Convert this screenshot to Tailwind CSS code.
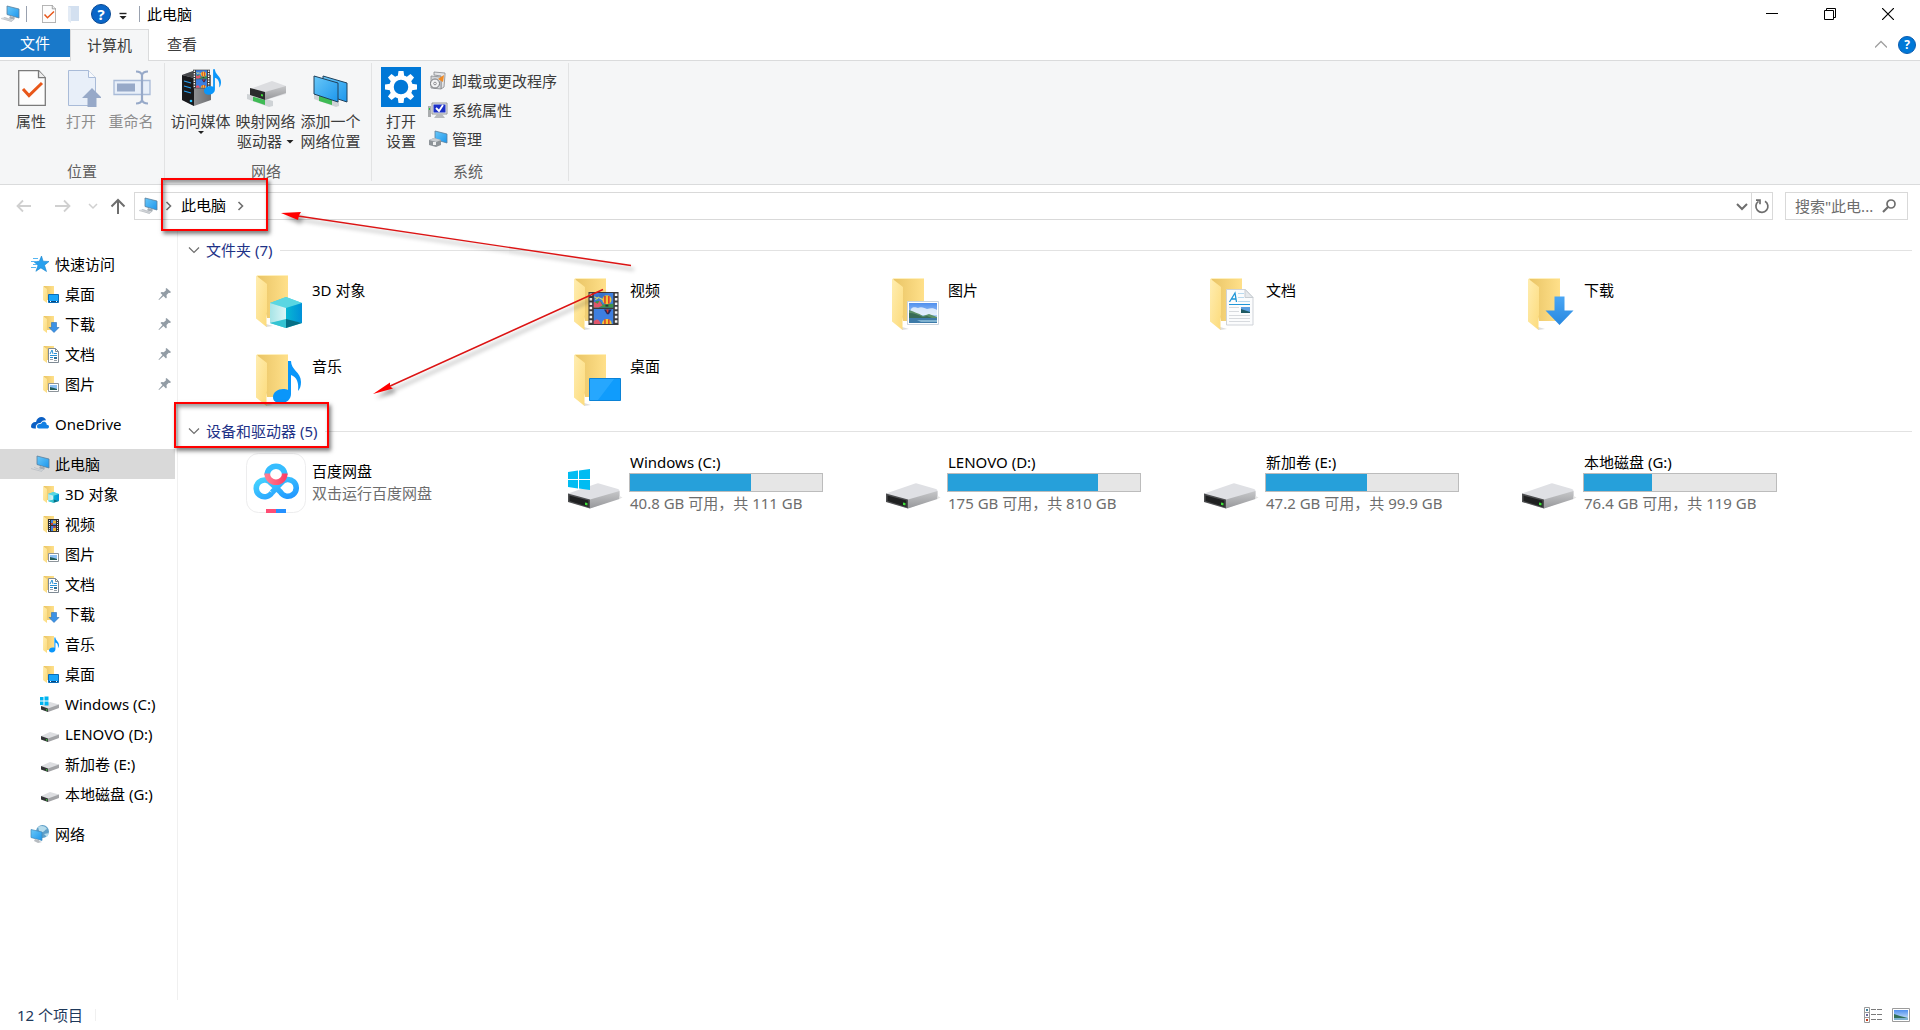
<!DOCTYPE html>
<html lang="zh-CN">
<head>
    <meta charset="UTF-8">
    <meta name="viewport" content="width=device-width, initial-scale=1.0">
    <title>此电脑</title>
    <script src="https://cdn.jsdelivr.net/npm/@tailwindcss/browser@4"></script>
</head>
<body class="relative flex min-h-screen flex-col bg-white font-['Noto_Sans','Noto_Sans_CJK_SC',sans-serif] text-[15px] leading-5 text-black">

    <!-- Icon sprite -->
    <svg class="absolute h-0 w-0" aria-hidden="true">
        <defs>
            <linearGradient id="gBack" x1="0" y1="0" x2="1" y2="0"><stop offset="0" stop-color="#e9c465"/><stop offset="1" stop-color="#ffe08a"/></linearGradient>
            <linearGradient id="gFlap" x1="0" y1="0" x2="1" y2="1"><stop offset="0" stop-color="#ffedb0"/><stop offset="1" stop-color="#fcdb7c"/></linearGradient>
            <linearGradient id="gScreen" x1="0" y1="0" x2="1" y2="1"><stop offset="0" stop-color="#6ac8f8"/><stop offset="1" stop-color="#1c96ec"/></linearGradient>
            <linearGradient id="gSide" x1="0" y1="0" x2="0" y2="1"><stop offset="0" stop-color="#c6c7c9"/><stop offset="1" stop-color="#97989b"/></linearGradient>
            <linearGradient id="gSky" x1="0" y1="0" x2="0" y2="1"><stop offset="0" stop-color="#4f8fee"/><stop offset="1" stop-color="#d9ecfb"/></linearGradient>
            <linearGradient id="gCubeL" x1="0" y1="0" x2="1" y2="0"><stop offset="0" stop-color="#a7e4e6"/><stop offset="1" stop-color="#dcf6f7"/></linearGradient>
            <linearGradient id="gCubeR" x1="0" y1="0" x2="1" y2="0"><stop offset="0" stop-color="#08b7d3"/><stop offset="1" stop-color="#0090d8"/></linearGradient>
            <linearGradient id="gArrow" x1="0" y1="0" x2="0" y2="1"><stop offset="0" stop-color="#4aa6f4"/><stop offset="1" stop-color="#2888e0"/></linearGradient>
            <linearGradient id="gPanL" x1="0" y1="0" x2="1" y2="1"><stop offset="0" stop-color="#45d4ff"/><stop offset="1" stop-color="#2196ff"/></linearGradient>
            <linearGradient id="gPanR" x1="0" y1="0" x2="1" y2="0"><stop offset="0" stop-color="#ff7a90"/><stop offset="1" stop-color="#ff4268"/></linearGradient>
            <linearGradient id="gTower" x1="0" y1="0" x2="1" y2="0"><stop offset="0" stop-color="#a8a9ab"/><stop offset="1" stop-color="#6e6f72"/></linearGradient>
        </defs>

        <!-- 64px folder -->
        <symbol id="folder" viewBox="0 0 64 64">
            <path d="M24 57l7 2-7 1z" fill="#ddd"/>
            <path d="M15 8h31v43H25z" fill="url(#gBack)"/>
            <path d="M14 8.500L25 17v28l-.5 1.500V60L14 51.500z" fill="url(#gFlap)"/>
            <path d="M15 8.500h31" stroke="#fff0bd"/>
        </symbol>
        <!-- hot-air balloon film strip -->
        <symbol id="film" viewBox="0 0 31 34">
            <path d="M0 0h31v34H0z" fill="#3b3b3d"/>
            <path d="M5.500 1h20v15h-20zM5.500 17.500h20V33h-20z" fill="#3d7fe0"/>
            <path d="M5.500 12c3-5 8-3 9 1l11-1v4h-20z" fill="#3e9448"/>
            <path d="M5.500 10l4 2 2-3 3 5-4 2h-5z" fill="#e0566b"/>
            <path d="M6 5l4 2M7 8l4-3M11 6l4 2" stroke="#dfe77c" stroke-width="1.200"/>
            <circle cx="19" cy="8" r="4.700" fill="#f4c534"/>
            <path d="M17 4v8M21 4v8" stroke="#d8372c" stroke-width="1.600"/><path d="M17.500 13h3v2h-3z" fill="#333"/>
            <path d="M16 18h8l-3 5h-2z" fill="#2b2757"/><path d="M18 18h3l-1 4z" fill="#d8372c"/>
            <path d="M14 33c0-7 10-7 10 0z" fill="#f4c534"/><path d="M17 28v5M21 28v5" stroke="#d8372c" stroke-width="1.500"/>
            <path d="M5.500 30c3-3 6-2 7 3h-7z" fill="#e0566b"/>
            <path d="M2.500 1.500v32M28.500 1.500v32" stroke="#f5f5f5" stroke-width="2.600" stroke-dasharray="2.600 2"/>
        </symbol>
        <symbol id="photo" viewBox="0 0 32 24">
            <path d="M.5.500h31v23H.5z" fill="#fff" stroke="#c9d3de"/>
            <path d="M2 2h28v20H2z" fill="url(#gSky)"/>
            <path d="M4 8c3-3 5-1 7-1 3-2 7 0 9 1 4-1 7-1 10 1v5H2z" fill="#f2f8fd" opacity=".8"/>
            <path d="M2 9c5 2 9 3 14 6l6-2 8 3v1H2z" fill="#5c9068"/>
            <path d="M2 12c5 0 9 2 14 4l4-1 5 2H2z" fill="#386b57"/>
            <path d="M2 17h28v5H2z" fill="#3d7aa8"/><path d="M10 19h20v2H14z" fill="#7fb2d0"/>
        </symbol>
        <symbol id="note" viewBox="0 0 28 42">
            <path d="M15 0h3c0 9 10 11 10 21 0 4-1 7-3 9 1-8-1-14-7-16v19c0 5-4 9-10 9-5 0-8-2-8-6 0-5 5-8 10-8 2 0 4 0 5 1z" fill="#0a96fa"/>
        </symbol>
        <symbol id="cube" viewBox="0 0 32 32">
            <path d="M16 0l16 6v20l-16 5L0 26V6z" fill="#3fd0e0"/>
            <path d="M16 0l16 6-16 5L0 6z" fill="#5ad6e2"/>
            <path d="M0 6l16 5v12L0 26z" fill="url(#gCubeL)"/>
            <path d="M32 6l-16 5v12l16 3z" fill="url(#gCubeR)"/>
            <path d="M16 22l16 4-16 5z" fill="#056f86"/><path d="M0 26l16-4v9z" fill="#35c3d2"/>
        </symbol>

        <symbol id="tile-3d" viewBox="0 0 64 64"><use href="#folder" y="-3" width="64" height="64"/><use href="#cube" x="28" y="27" width="32" height="32"/></symbol>
        <symbol id="tile-video" viewBox="0 0 64 64"><use href="#folder" width="64" height="64"/><use href="#film" x="28" y="22" width="31" height="33"/></symbol>
        <symbol id="tile-picture" viewBox="0 0 64 64"><use href="#folder" width="64" height="64"/><use href="#photo" x="29" y="31" width="32" height="24"/></symbol>
        <symbol id="tile-document" viewBox="0 0 64 64">
            <use href="#folder" width="64" height="64"/>
            <path d="M30.500 19.500h19l7.500 8V55H30.500z" fill="#fbfcfd" stroke="#cfd3d8"/>
            <path d="M49 19.500v8h8z" fill="#e6e9ec" stroke="#c8cdd2"/>
            <path d="M33.500 32l5.500-9 1.500 9M35.500 29h4.500" fill="none" stroke="#1e96d8" stroke-width="1.300"/>
            <path d="M42 23.500h6M42 27.500h6M42 31.500h12" stroke="#b9d9ee"/>
            <path d="M33 34.500h21" stroke="#1e96d8"/>
            <path d="M33 37.500h10M33 41.500h10M33 45.500h21M33 48.500h21M33 51.500h21" stroke="#d7dade"/>
            <path d="M45 37h9v6h-9z" fill="#5b9fe0"/><path d="M45 39l9 3v1h-9z" fill="#1e5a63"/>
        </symbol>
        <symbol id="tile-download" viewBox="0 0 64 64"><use href="#folder" width="64" height="64"/><path d="M40.500 26.500h10v14h9L45.500 55l-14-14.500h9z" fill="url(#gArrow)"/></symbol>
        <symbol id="tile-music" viewBox="0 0 64 64"><use href="#folder" width="64" height="64"/><use href="#note" x="31" y="15" width="28" height="42"/></symbol>
        <symbol id="tile-desktop" viewBox="0 0 64 64"><use href="#folder" width="64" height="64"/><path d="M29.500 32.500h31v22h-31z" fill="#109cfc" stroke="#0b82d6"/><path d="M30 33h24L38 54h-8z" fill="#31acff" opacity=".7"/></symbol>
        <symbol id="drive" viewBox="0 0 64 64">
            <path d="M8 42.500L37 32.500q1-.4 2 0L58 38q1.500.5 1.500 2v7L30 57.500 8 50.500z" fill="#dfe0e4"/>
            <path d="M30 48.500L59.500 40v8L30 57.500z" fill="url(#gSide)"/>
            <path d="M8 42.500l22 6v9L8 51z" fill="#4e4f51"/><path d="M9.500 44.500l19 5v6.500L9.500 50z" fill="#1f2021"/>
            <path d="M25 51.500l2.500.6v2.500L25 54z" fill="#3fe03a"/>
            <path d="M59.500 45l3 1.500-3 1.500z" fill="#e4e4e4"/>
        </symbol>
        <symbol id="winlogo" viewBox="0 0 22 21"><path d="M0 3l10-1.500V10H0zM11 1.400L22 0v10H11zM0 11h10v8.500L0 18zM11 11h11v10l-11-1.400z" fill="#00bcf2"/></symbol>
        <symbol id="tile-windrive" viewBox="0 0 64 64"><use href="#drive" width="64" height="64"/><use href="#winlogo" x="8" y="18" width="22" height="21"/></symbol>
        <symbol id="tile-pan" viewBox="0 0 64 64">
            <rect x="4.500" y="2.500" width="59" height="59" rx="12" fill="#fff" stroke="#ededee"/>
            <g fill="none" stroke-width="5.600">
                <path d="M30 41.500a8.400 8.400 0 1 1-.5-9l9 8.500a8.400 8.400 0 1 0 .5-9L30 41.500" stroke="url(#gPanL)"/>
                <path d="M25.200 24a8.800 8.800 0 0 1 17.600 0" stroke="#36bdff"/>
                <path d="M25.200 22.500a8.800 8.800 0 0 0 17.600 0" stroke="url(#gPanR)"/>
            </g>
            <path d="M24 58h10v4H24z" fill="#ff4d74"/><path d="M34 58h10v4H34z" fill="#2591ff"/>
        </symbol>

        <!-- 20px tree icons -->
        <symbol id="s-folder" viewBox="0 0 20 20"><path d="M3.500 2H14v14H7z" fill="url(#gBack)"/><path d="M3 2.300L7 5v14l-4-3z" fill="url(#gFlap)"/></symbol>
        <symbol id="s-desktop" viewBox="0 0 20 20"><use href="#s-folder" width="20" height="20"/><path d="M8.500 10.500h10v8h-10z" fill="#17a4fa" stroke="#0a6cb8"/><path d="M9 17.500h9" stroke="#07467c"/><path d="M10 17.500h1M16 17.500h1" stroke="#fff"/></symbol>
        <symbol id="s-download" viewBox="0 0 20 20"><use href="#s-folder" width="20" height="20"/><path d="M11.500 8.500h5v5H19L14 18.500 9 13.500h2.500z" fill="#3c92e6" stroke="#2a6fb4" stroke-width=".6"/></symbol>
        <symbol id="s-document" viewBox="0 0 20 20"><use href="#s-folder" width="20" height="20"/><path d="M8.500 4.500h7l3 3v11h-10z" fill="#fff" stroke="#7e8a94"/><path d="M15.500 4.500v3h3" fill="none" stroke="#7e8a94"/><path d="M10 10l2-4 1 4M14 9.500h3M10 11.500h7M10 13.500h3" fill="none" stroke="#2a92d6"/><path d="M10 15.500h3M14 16.500h3" stroke="#9aa2a8"/><path d="M14 13h3v2h-3z" fill="#2e6f96"/></symbol>
        <symbol id="s-picture" viewBox="0 0 20 20"><use href="#s-folder" width="20" height="20"/><path d="M8.500 9.500h10v8h-10z" fill="#fff" stroke="#8d949a"/><path d="M10 11h7v5h-7z" fill="#8dc0f4"/><path d="M10 13l4 1 3 1v1h-7z" fill="#245e5a"/></symbol>
        <symbol id="s-video" viewBox="0 0 20 20">
            <use href="#s-folder" width="20" height="20"/>
            <path d="M8 5h11v13H8z" fill="#2f3032"/><path d="M11 6h5v5h-5zM11 12h5v5h-5z" fill="#3d7fe0"/><path d="M13 6.500h3v3h-3zM13 14h3v3h-3z" fill="#f0b932"/><path d="M11 9h2v2h-2zM13.500 12h2v2h-2z" fill="#b8433f"/>
            <path d="M9.500 6v12M17.500 6v12" stroke="#e9e9e9" stroke-dasharray="1 1"/>
        </symbol>
        <symbol id="s-music" viewBox="0 0 20 20"><use href="#s-folder" width="20" height="20"/><use href="#note" x="9" y="3" width="10" height="16"/></symbol>
        <symbol id="s-3d" viewBox="0 0 20 20"><use href="#s-folder" width="20" height="20"/><use href="#cube" x="8" y="8" width="11" height="11"/></symbol>
        <symbol id="s-drive" viewBox="0 0 20 20"><path d="M1 12l9-4 9 2.500v3L8 17.500l-7-2z" fill="#dddee1"/><path d="M8 14.500l11-4v3.500L8 18z" fill="#a2a3a6"/><path d="M1 12l7 2.500V18l-7-2.500z" fill="#333436"/><path d="M6 15.200h1.300v1.300H6z" fill="#3fe03a"/></symbol>
        <symbol id="s-windrive" viewBox="0 0 20 20"><use href="#s-drive" width="20" height="20"/><path d="M0 3h3.500v3.500H0zM4.500 2.500h4v4h-4zM0 7.500h3.500V11H0zM4.500 7.500h4v4h-4z" fill="#00b4f0"/></symbol>
        <symbol id="s-pc" viewBox="0 0 20 20"><path d="M7 2l12 3v9L7 10.500z" fill="url(#gScreen)" stroke="#5a7f9c" stroke-width=".8"/><path d="M10 12l5 1.500-1 2.500-5-1.500z" fill="#a6adb3"/><path d="M1 14l4-1 9 3-3 2z" fill="#d9dcdf"/><path d="M1 14.500l11 3M4 13.500l9 3" stroke="#b4b9be" stroke-width=".7"/></symbol>
        <symbol id="s-star" viewBox="0 0 20 20"><path d="M11.500 2l1.600 5.200 5.900.3-4.500 3.700 2 6.300-5.600-3.600-5 3.400L8 11.500 4 7.700l5.300-.4z" fill="#28a0ee" stroke="#1583cc" stroke-width=".6"/><path d="M3 4.500h5M1 7.500h6M3 10.500h4M1 13.500h5" stroke="#56b5f2" stroke-width="1"/></symbol>
        <symbol id="s-cloud" viewBox="0 0 20 20"><path d="M1 12.500C1 9 4 7.500 6 8c.7-3.500 3-5 5.500-5 2.300 0 4 1.500 4.500 3.500-3 0-4.500 1-5.500 3-3 0-5 2-4.500 5H4c-2 0-3-1-3-2z" fill="#0a5fc4"/><path d="M7 12.500c0-2 2-3 4-2.500.7-2 2.500-3 4-2 1.300.7 1.700 1.700 1.700 2.700C18.300 10.700 19 11.500 19 12.700c0 1.200-.8 1.800-2 1.800H9c-1.300 0-2-.8-2-2z" fill="#1280e4"/><path d="M6.300 13.500c-.5-3 1.700-4.300 4.300-4 .9-2 2.700-3.200 5.400-2.500" fill="none" stroke="#fff" stroke-width=".8"/></symbol>
        <symbol id="s-network" viewBox="0 0 20 20"><circle cx="12.500" cy="7.500" r="6.500" fill="#5f9fc8"/><path d="M8 3c3-2 8-1 9 2-3 1-3 4-6 3s-2-3-3-5zM14 10l5-1-2 4z" fill="#b6dcec"/><path d="M1 5.500l11 2.500v8.500L1 13.500z" fill="url(#gScreen)" stroke="#3f87b8" stroke-width=".7"/><path d="M5 15l4 1v1l3 1-4 1-4-2z" fill="#b7bcc1"/></symbol>
        <symbol id="s-pin" viewBox="0 0 14 14"><path d="M8.500 1L13 5l-1 1-1.200-.3L8.500 8l.3 2.500L8 11.500 5.500 9 1 13l-.5-.5L4.500 8 2.500 6l1-1 2.300.3L8.200 3 7.500 2z" fill="#929ca5"/></symbol>
        <symbol id="check-doc" viewBox="0 0 28 36"><path d="M.7.700h20l6.600 7v27.600H.7z" fill="#fdfdfd" stroke="#7b7b7b" stroke-width="1.300"/><path d="M20.500.700v7h7" fill="#eee" stroke="#7b7b7b" stroke-width="1.300"/><path d="M5 19l6 6.500L24 13" fill="none" stroke="#e8571a" stroke-width="3"/></symbol>
    </svg>

    <!-- Title bar -->
    <header class="flex h-[29px] items-center pb-0.5">
        <svg class="h-5 w-5"><use href="#s-pc"/></svg>
        <span class="ml-1.5 h-4 w-px bg-gray-400"></span>
        <button class="ml-[15px]" aria-label="属性"><svg class="h-[18px] w-[14px]"><use href="#check-doc"/></svg></button>
        <button class="ml-3" aria-label="新建文件夹">
            <svg class="h-[18px] w-3" viewBox="0 0 12 18"><path d="M0 1h11v15H3z" fill="#d3e0f0"/><path d="M0 1l3 2v15l-3-2z" fill="#e3ebf5"/></svg>
        </button>
        <button class="ml-[11px] flex h-5 w-5 items-center justify-center rounded-full border border-[#0b4a94] bg-[#0a66c8] font-bold text-white" aria-label="帮助">?</button>
        <button class="ml-2" aria-label="自定义快速访问工具栏"><svg class="h-5 w-2" viewBox="0 0 8 20"><path d="M.5 9.500h7" stroke="#222" stroke-width="1.400"/><path d="M.5 12h7L4 15.500z" fill="#222"/></svg></button>
        <span class="ml-3 h-4 w-px bg-gray-400"></span>
        <h1 class="ml-[7px] flex-1">此电脑</h1>
        <div class="mr-[3px] flex">
            <button class="flex h-7 w-[58px] items-center justify-center" aria-label="最小化"><svg class="h-3 w-3" viewBox="0 0 12 12"><path d="M0 5.500h12" stroke="#000"/></svg></button>
            <button class="flex h-7 w-[58px] items-center justify-center" aria-label="还原"><svg class="h-3 w-3" viewBox="0 0 12 12"><path d="M.5 2.500h9v9h-9zM2.500 2.500v-2h9v9h-2" fill="none" stroke="#000"/></svg></button>
            <button class="flex h-7 w-[58px] items-center justify-center" aria-label="关闭"><svg class="h-3 w-3" viewBox="0 0 12 12"><path d="M0 0l12 12M12 0L0 12" stroke="#000" stroke-width="1.200"/></svg></button>
        </div>
    </header>

    <!-- Ribbon tabs -->
    <nav class="flex h-8 items-stretch border-b border-[#dadbdc] text-[#3c3c3c]">
        <button class="mb-[3px] w-[70px] bg-[#1979ca] text-white">文件</button>
        <button class="-mb-px w-[79px] border border-b-0 border-[#dadbdc] bg-[#f5f6f7] pb-0.5">计算机</button>
        <button class="w-[66px] pb-0.5">查看</button>
        <div class="ml-auto flex items-center gap-[11px] pr-1">
            <button aria-label="最小化功能区"><svg class="h-3 w-3" viewBox="0 0 12 12"><path d="M0 8.500l6-6 6 6" fill="none" stroke="#a0a0a0" stroke-width="1.300"/></svg></button>
            <button class="flex h-[18px] w-[18px] items-center justify-center rounded-full border border-[#0b5cb0] bg-[#0078d7] text-xs font-bold text-white" aria-label="帮助">?</button>
        </div>
    </nav>

    <!-- Ribbon -->
    <section class="flex h-[124px] border-b border-[#dadbdc] bg-[#f5f6f7] pt-0.5 pb-[3px] text-[#3c3c3c]">
        <div class="flex w-[165px] flex-col border-r border-[#e2e3e4]">
            <div class="flex flex-1 items-start pt-1 pl-1.5">
                <button class="flex w-[50px] flex-col items-center gap-1">
                    <svg class="h-10 w-10" viewBox="0 0 40 40"><use href="#check-doc" x="7" y="3" width="28" height="36"/></svg>
                    <span>属性</span>
                </button>
                <button class="flex w-[50px] flex-col items-center gap-1 text-[#8d8d8d]">
                    <svg class="h-10 w-10" viewBox="0 0 40 40"><path d="M7.500 3.500h20l7 7v28h-27z" fill="#e8eff9" stroke="#a9bbd8"/><path d="M27.500 3.500v7h7" fill="#f7f9fc" stroke="#a9bbd8"/><path d="M31 21l10 10h-5.500v9.500h-9V31H21z" fill="#97a9c8"/></svg>
                    <span>打开</span>
                </button>
                <button class="flex w-[50px] flex-col items-center gap-1 text-[#8d8d8d]">
                    <svg class="h-10 w-10" viewBox="0 0 40 40"><path d="M3 13.500h36v14H3z" fill="#e8eff9" stroke="#a9bbd8" stroke-width="1.300"/><path d="M6 16.500h18v8H6z" fill="#97a9c8"/><path d="M31 7v27M25 4.500q5 0 6 3.500 1-3.500 6-3.500M25 36.500q5 0 6-3.500 1 3.500 6 3.500" fill="none" stroke="#97a9c8" stroke-width="2.200"/></svg>
                    <span class="whitespace-nowrap">重命名</span>
                </button>
            </div>
            <p class="text-center text-[#5f5f5f]">位置</p>
        </div>
        <div class="flex w-[207px] flex-col border-r border-[#e2e3e4]">
            <div class="flex flex-1 items-start pt-1 pl-[3px]">
                <button class="flex w-[65px] flex-col items-center gap-1">
                    <svg class="h-10 w-10" viewBox="0 0 40 40">
                        <path d="M1 8l12-4 17 4v25l-17 6L1 33z" fill="url(#gTower)"/>
                        <path d="M1 8l12 3v28L1 33z" fill="#18191c"/><path d="M1 8l11-4 8 2-7 5z" fill="#47494d"/>
                        <path d="M3 14l7 2M3 19l7 2M3 24l7 2" stroke="#2aa0f0" stroke-width="1.300"/><circle cx="10" cy="34" r="1.300" fill="#29c4ff"/>
                        <use href="#film" x="12" y="2" width="17" height="20"/>
                        <use href="#note" x="23" y="2" width="17" height="26"/>
                    </svg>
                    <span class="whitespace-nowrap">访问媒体</span>
                    <svg class="-mt-1 h-1 w-2" viewBox="0 0 8 4"><path d="M1 0h6L4 3z" fill="#222"/></svg>
                </button>
                <button class="flex w-[65px] flex-col items-center gap-1">
                    <svg class="h-10 w-10" viewBox="0 0 40 40">
                        <path d="M1 27l6 1 20 6v5l-4 1-14-5-8-3z" fill="#cfd3d6"/><path d="M7 28l12 4v6L7 34z" fill="#3fbb55"/>
                        <path d="M4 22l22-8 14 5v8L19 33 4 29z" fill="#dcdde0"/><path d="M19 25l21-6v7l-21 7z" fill="url(#gSide)"/><path d="M4 21l15 4v8L4 28z" fill="#2b2c2d"/><path d="M15 27l2 .5v2l-2-.5z" fill="#3fe03a"/>
                    </svg>
                    <span class="whitespace-nowrap">映射网络<br>驱动器<svg class="mb-0.5 ml-1 inline h-1 w-2" viewBox="0 0 8 4"><path d="M.5 0h7L4 3.500z" fill="#222"/></svg></span>
                </button>
                <button class="flex w-[65px] flex-col items-center gap-1">
                    <svg class="h-10 w-10" viewBox="0 0 40 40">
                        <path d="M3 27l5 1 20 6v5l-3 1-14-5-8-3z" fill="#cfd3d6"/><path d="M8 28l13 4v6L8 34z" fill="#3fbb55"/>
                        <path d="M12 9l24 7v19l-24-8z" fill="url(#gScreen)" stroke="#20405a"/><path d="M3 9l24 7v19L3 27z" fill="url(#gScreen)" stroke="#20405a"/>
                    </svg>
                    <span class="whitespace-nowrap">添加一个<br>网络位置</span>
                </button>
            </div>
            <p class="pr-1 text-center text-[#5f5f5f]">网络</p>
        </div>
        <div class="flex w-[197px] flex-col border-r border-[#e2e3e4]">
            <div class="flex flex-1 items-start pt-1 pl-1">
                <button class="flex w-[50px] flex-col items-center gap-1">
                    <svg class="h-10 w-10" viewBox="0 0 40 40">
                        <path d="M0 0h40v40H0z" fill="#0078d7"/>
                        <g fill="#fff"><path id="tooth" d="M17.500 4h5l1 7h-7z"/><use href="#tooth" transform="rotate(45 20 20)"/><use href="#tooth" transform="rotate(90 20 20)"/><use href="#tooth" transform="rotate(135 20 20)"/><use href="#tooth" transform="rotate(180 20 20)"/><use href="#tooth" transform="rotate(225 20 20)"/><use href="#tooth" transform="rotate(270 20 20)"/><use href="#tooth" transform="rotate(315 20 20)"/></g>
                        <circle cx="20" cy="20" r="9.500" fill="none" stroke="#fff" stroke-width="4.500"/>
                    </svg>
                    <span>打开<br>设置</span>
                </button>
                <div class="flex flex-col gap-[9px] pt-1 pl-0.5">
                    <button class="flex items-center gap-1">
                        <svg class="h-5 w-5" viewBox="0 0 20 20"><path d="M6 1l11 1v2l-1 12-3 2V5L6 4z" fill="#e4e5e7" stroke="#85888c" stroke-width=".8"/><path d="M3 5l10 1v12l-10-1z" fill="#d3d5d8" stroke="#85888c" stroke-width=".8"/><path d="M10 8l6-4-1 7z" fill="#f08a24"/><circle cx="7" cy="12.500" r="4.500" fill="#f1f2f3" stroke="#77797c" stroke-width="1"/><circle cx="7" cy="12.500" r="1.300" fill="#fff" stroke="#77797c" stroke-width=".8"/></svg>
                        卸载或更改程序
                    </button>
                    <button class="flex items-center gap-1">
                        <svg class="h-5 w-5" viewBox="0 0 20 20"><path d="M0 6h3v11H0z" fill="#a9acae"/><path d="M1 8h1v2H1z" fill="#2fc43a"/><path d="M4 3h15v11H4z" fill="#e6e7e9" stroke="#96999c"/><path d="M5.500 4.500h12v8h-12z" fill="#1c30c8"/><path d="M8 8l3 3 4-6" fill="none" stroke="#fff" stroke-width="1.800"/><path d="M9 14h5l3 4H6z" fill="#b7babd"/></svg>
                        系统属性
                    </button>
                    <button class="flex items-center gap-1">
                        <svg class="h-5 w-5" viewBox="0 0 20 20"><path d="M7 2l12 3v9L7 10.500z" fill="url(#gScreen)" stroke="#5a7f9c" stroke-width=".8"/><path d="M1 11l5-2 7 2v5l-5 2-7-2z" fill="#8e9499"/><path d="M1 11l5-2 7 2-5 2z" fill="#c8ccd0"/><path d="M5 13h3v3H5z" fill="#f0f1f2"/></svg>
                        管理
                    </button>
                </div>
            </div>
            <p class="pr-1 text-center text-[#5f5f5f]">系统</p>
        </div>
    </section>

    <!-- Navigation and address bar -->
    <div class="flex h-11 items-start pt-[7px] pr-3">
        <div class="flex h-7 w-[134px] items-center pl-4">
            <button aria-label="后退"><svg class="h-4 w-4" viewBox="0 0 16 16"><path d="M15 8H1.500M7 2.500L1.500 8 7 13.500" fill="none" stroke="#d0d0d0" stroke-width="1.800"/></svg></button>
            <button class="ml-[23px]" aria-label="前进"><svg class="h-4 w-4" viewBox="0 0 16 16"><path d="M0 8h14M9 2.500L14.500 8 9 13.500" fill="none" stroke="#d0d0d0" stroke-width="1.800"/></svg></button>
            <button class="ml-[17px]" aria-label="最近浏览的位置"><svg class="h-4 w-2.5" viewBox="0 0 10 16"><path d="M1 6l4 4 4-4" fill="none" stroke="#d0d0d0" stroke-width="1.500"/></svg></button>
            <button class="ml-3" aria-label="上移"><svg class="h-4 w-4" viewBox="0 0 16 16"><path d="M8 16V2M1.500 8.500L8 2l6.500 6.500" fill="none" stroke="#6e6e6e" stroke-width="2"/></svg></button>
        </div>
        <div class="flex h-7 flex-1 items-center border border-[#d9d9d9] pl-[3px]">
            <svg class="h-5 w-5"><use href="#s-pc"/></svg>
            <svg class="ml-[7px] h-3 w-2" viewBox="0 0 8 12"><path d="M1.500 2l4 4-4 4" fill="none" stroke="#6e6e6e" stroke-width="1.600"/></svg>
            <button class="ml-2 pb-0.5">此电脑</button>
            <svg class="ml-[11px] h-3 w-2" viewBox="0 0 8 12"><path d="M1.500 2l4 4-4 4" fill="none" stroke="#6e6e6e" stroke-width="1.600"/></svg>
            <button class="mr-[3px] ml-auto" aria-label="以前的位置"><svg class="h-3 w-3" viewBox="0 0 12 12"><path d="M1 4l5 5 5-5" fill="none" stroke="#6e6e6e" stroke-width="2"/></svg></button>
            <button class="flex h-full w-[21px] items-center justify-center border-l border-[#d9d9d9]" aria-label="刷新">
                <svg class="h-4 w-4" viewBox="0 0 16 16"><path d="M11 3.200a6 6 0 1 1-6.500.2M2 2.200h4v4" fill="none" stroke="#6e6e6e" stroke-width="1.700"/></svg>
            </button>
        </div>
        <div class="ml-3 flex h-7 w-[123px] items-center border border-[#d9d9d9] pl-[9px]">
            <input id="search" type="text" aria-label="搜索此电脑" placeholder="搜索&quot;此电..." class="w-20 outline-none placeholder:text-[#6d6d6d]">
            <button class="ml-[7px]" aria-label="搜索"><svg class="h-[14px] w-[14px]" viewBox="0 0 14 14"><circle cx="9" cy="5" r="4" fill="none" stroke="#6e6e6e" stroke-width="1.700"/><path d="M6 8L1 13" stroke="#6e6e6e" stroke-width="2.200"/></svg></button>
        </div>
    </div>

    <div class="flex flex-1">
        <!-- Navigation tree -->
        <aside class="w-[178px] shrink-0 border-r border-[#f0f0f0] pt-5 *:mb-2.5">
            <div>
                <a href="#" class="flex h-[30px] items-center gap-[5px] pl-[30px]"><svg class="h-5 w-5"><use href="#s-star"/></svg>快速访问</a>
                <a href="#" class="flex h-[30px] items-center gap-[5px] pr-[5px] pl-10"><svg class="h-5 w-5"><use href="#s-desktop"/></svg>桌面<svg class="ml-auto h-[14px] w-[14px]"><use href="#s-pin"/></svg></a>
                <a href="#" class="flex h-[30px] items-center gap-[5px] pr-[5px] pl-10"><svg class="h-5 w-5"><use href="#s-download"/></svg>下载<svg class="ml-auto h-[14px] w-[14px]"><use href="#s-pin"/></svg></a>
                <a href="#" class="flex h-[30px] items-center gap-[5px] pr-[5px] pl-10"><svg class="h-5 w-5"><use href="#s-document"/></svg>文档<svg class="ml-auto h-[14px] w-[14px]"><use href="#s-pin"/></svg></a>
                <a href="#" class="flex h-[30px] items-center gap-[5px] pr-[5px] pl-10"><svg class="h-5 w-5"><use href="#s-picture"/></svg>图片<svg class="ml-auto h-[14px] w-[14px]"><use href="#s-pin"/></svg></a>
            </div>
            <a href="#" class="flex h-[30px] items-center gap-[5px] pl-[30px]"><svg class="h-5 w-5"><use href="#s-cloud"/></svg>OneDrive</a>
            <div>
                <a href="#" class="mr-0.5 flex h-[30px] items-center gap-[5px] bg-[#d9d9d9] pl-[30px]"><svg class="h-5 w-5"><use href="#s-pc"/></svg>此电脑</a>
                <a href="#" class="flex h-[30px] items-center gap-[5px] pl-10"><svg class="h-5 w-5"><use href="#s-3d"/></svg>3D 对象</a>
                <a href="#" class="flex h-[30px] items-center gap-[5px] pl-10"><svg class="h-5 w-5"><use href="#s-video"/></svg>视频</a>
                <a href="#" class="flex h-[30px] items-center gap-[5px] pl-10"><svg class="h-5 w-5"><use href="#s-picture"/></svg>图片</a>
                <a href="#" class="flex h-[30px] items-center gap-[5px] pl-10"><svg class="h-5 w-5"><use href="#s-document"/></svg>文档</a>
                <a href="#" class="flex h-[30px] items-center gap-[5px] pl-10"><svg class="h-5 w-5"><use href="#s-download"/></svg>下载</a>
                <a href="#" class="flex h-[30px] items-center gap-[5px] pl-10"><svg class="h-5 w-5"><use href="#s-music"/></svg>音乐</a>
                <a href="#" class="flex h-[30px] items-center gap-[5px] pl-10"><svg class="h-5 w-5"><use href="#s-desktop"/></svg>桌面</a>
                <a href="#" class="flex h-[30px] items-center gap-[5px] pl-10"><svg class="h-5 w-5"><use href="#s-windrive"/></svg>Windows (C:)</a>
                <a href="#" class="flex h-[30px] items-center gap-[5px] pl-10"><svg class="h-5 w-5"><use href="#s-drive"/></svg>LENOVO (D:)</a>
                <a href="#" class="flex h-[30px] items-center gap-[5px] pl-10"><svg class="h-5 w-5"><use href="#s-drive"/></svg>新加卷 (E:)</a>
                <a href="#" class="flex h-[30px] items-center gap-[5px] pl-10"><svg class="h-5 w-5"><use href="#s-drive"/></svg>本地磁盘 (G:)</a>
            </div>
            <a href="#" class="flex h-[30px] items-center gap-[5px] pl-[30px]"><svg class="h-5 w-5"><use href="#s-network"/></svg>网络</a>
        </aside>

        <!-- Content -->
        <main class="flex-1 pt-[7px]">
            <div class="flex h-7 items-center pr-2 pl-2.5">
                <button class="flex items-center gap-1.5 text-[#1e3287]"><svg class="h-3 w-3" viewBox="0 0 12 12"><path d="M1 3.500l5 5 5-5" fill="none" stroke="#6e6e6e" stroke-width="1.200"/></svg>文件夹 (7)</button>
                <span class="ml-2 h-px flex-1 bg-[#e2e2e2]"></span>
            </div>
            <div class="grid grid-cols-[repeat(auto-fill,318px)] pl-16">
                <button class="flex h-[76px] items-start gap-1.5 py-1.5"><svg class="h-16 w-16"><use href="#tile-3d"/></svg><span class="mt-2.5">3D 对象</span></button>
                <button class="flex h-[76px] items-start gap-1.5 py-1.5"><svg class="h-16 w-16"><use href="#tile-video"/></svg><span class="mt-2.5">视频</span></button>
                <button class="flex h-[76px] items-start gap-1.5 py-1.5"><svg class="h-16 w-16"><use href="#tile-picture"/></svg><span class="mt-2.5">图片</span></button>
                <button class="flex h-[76px] items-start gap-1.5 py-1.5"><svg class="h-16 w-16"><use href="#tile-document"/></svg><span class="mt-2.5">文档</span></button>
                <button class="flex h-[76px] items-start gap-1.5 py-1.5"><svg class="h-16 w-16"><use href="#tile-download"/></svg><span class="mt-2.5">下载</span></button>
                <button class="flex h-[76px] items-start gap-1.5 py-1.5"><svg class="h-16 w-16"><use href="#tile-music"/></svg><span class="mt-2.5">音乐</span></button>
                <button class="flex h-[76px] items-start gap-1.5 py-1.5"><svg class="h-16 w-16"><use href="#tile-desktop"/></svg><span class="mt-2.5">桌面</span></button>
            </div>

            <div class="mt-px flex h-7 items-center pr-2 pl-2.5">
                <button class="flex items-center gap-1.5 text-[#1e3287]"><svg class="h-3 w-3" viewBox="0 0 12 12"><path d="M1 3.500l5 5 5-5" fill="none" stroke="#6e6e6e" stroke-width="1.200"/></svg>设备和驱动器 (5)</button>
                <span class="ml-2 h-px flex-1 bg-[#e2e2e2]"></span>
            </div>
            <div class="grid grid-cols-[repeat(auto-fill,318px)] pl-16">
                <button class="flex h-[76px] items-start gap-1.5 py-1.5 text-left">
                    <svg class="h-16 w-16"><use href="#tile-pan"/></svg>
                    <span class="mt-2.5 flex flex-col gap-0.5"><span>百度网盘</span><span class="text-[#6d6d6d]">双击运行百度网盘</span></span>
                </button>
                <button class="flex h-[76px] items-start gap-[5px] py-1.5 text-left">
                    <svg class="h-16 w-16"><use href="#tile-windrive"/></svg>
                    <span class="flex flex-col pt-px">
                        <span class="pl-px">Windows (C:)</span>
                        <span class="my-px block h-[19px] w-[194px] border border-[#bcbcbc] bg-[#e6e6e6]"><span class="block h-full bg-[#26a0da]" style="width: 63%"></span></span>
                        <span class="pl-px text-[#6d6d6d]">40.8 GB 可用，共 111 GB</span>
                    </span>
                </button>
                <button class="flex h-[76px] items-start gap-[5px] py-1.5 text-left">
                    <svg class="h-16 w-16"><use href="#drive"/></svg>
                    <span class="flex flex-col pt-px">
                        <span class="pl-px">LENOVO (D:)</span>
                        <span class="my-px block h-[19px] w-[194px] border border-[#bcbcbc] bg-[#e6e6e6]"><span class="block h-full bg-[#26a0da]" style="width: 78%"></span></span>
                        <span class="pl-px text-[#6d6d6d]">175 GB 可用，共 810 GB</span>
                    </span>
                </button>
                <button class="flex h-[76px] items-start gap-[5px] py-1.5 text-left">
                    <svg class="h-16 w-16"><use href="#drive"/></svg>
                    <span class="flex flex-col pt-px">
                        <span class="pl-px">新加卷 (E:)</span>
                        <span class="my-px block h-[19px] w-[194px] border border-[#bcbcbc] bg-[#e6e6e6]"><span class="block h-full bg-[#26a0da]" style="width: 52.5%"></span></span>
                        <span class="pl-px text-[#6d6d6d]">47.2 GB 可用，共 99.9 GB</span>
                    </span>
                </button>
                <button class="flex h-[76px] items-start gap-[5px] py-1.5 text-left">
                    <svg class="h-16 w-16"><use href="#drive"/></svg>
                    <span class="flex flex-col pt-px">
                        <span class="pl-px">本地磁盘 (G:)</span>
                        <span class="my-px block h-[19px] w-[194px] border border-[#bcbcbc] bg-[#e6e6e6]"><span class="block h-full bg-[#26a0da]" style="width: 35.5%"></span></span>
                        <span class="pl-px text-[#6d6d6d]">76.4 GB 可用，共 119 GB</span>
                    </span>
                </button>
            </div>
        </main>
    </div>

    <!-- Status bar -->
    <footer class="flex h-[30px] items-center pr-2.5 pl-[17px] text-[#1e395b]">
        <span>12 个项目</span>
        <span class="ml-3 h-3 w-px bg-[#f0f0f0]"></span>
        <button class="ml-auto" aria-label="详细信息"><svg class="h-4 w-[18px]" viewBox="0 0 18 16"><path d="M.5.500h5v15h-5zM.5 5.500h5M.5 10.500h5" fill="#fff" stroke="#9b9b9b"/><path d="M7 2.500h5M13 2.500h5M7 7.500h5M13 7.500h5M7 12.500h5M13 12.500h5" stroke="#7a7a7a"/><path d="M2 2h2v2H2z" fill="#3b7f9c"/><path d="M2 7h2v2H2z" fill="#6b6a9c"/><path d="M2 12h2v2H2z" fill="#c23a1a"/></svg></button>
        <button class="ml-2.5" aria-label="大图标"><svg class="h-[14px] w-[18px]" viewBox="0 0 18 14"><path d="M.5.500h17v13H.5z" fill="#fff" stroke="#9b9b9b"/><path d="M2 2h14v10H2z" fill="url(#gSky)"/><path d="M2 6l6 2 8 2v1H2z" fill="#33705a"/><path d="M2 10h14v2H2z" fill="#7fb2d0"/></svg></button>
    </footer>

    <!-- Annotations -->
    <div class="pointer-events-none absolute top-[178px] left-[161px] h-[53px] w-[107px] border-2 border-[#ff0000] shadow-[2px_3px_4px_rgba(0,0,0,0.5),inset_2px_3px_4px_rgba(0,0,0,0.4)]"></div>
    <div class="pointer-events-none absolute top-[402px] left-[174px] h-[46px] w-[155px] border-2 border-[#ff0000] shadow-[2px_3px_4px_rgba(0,0,0,0.5),inset_2px_3px_4px_rgba(0,0,0,0.4)]"></div>
    <svg class="pointer-events-none absolute top-[205px] left-[274px] h-[200px] w-[368px] drop-shadow-[3px_4px_2px_rgba(0,0,0,0.4)]" viewBox="274 205 368 200">
        <path d="M631 265.500L298 216M603 289.500L388 387" stroke="#dc1414" stroke-width="1.400"/>
        <path d="M281 213l20-1-2 3.500 -1 4.500zM373 394l17-11.500 0 4 3 2z" fill="#ff0000"/>
    </svg>
</body>
</html>
